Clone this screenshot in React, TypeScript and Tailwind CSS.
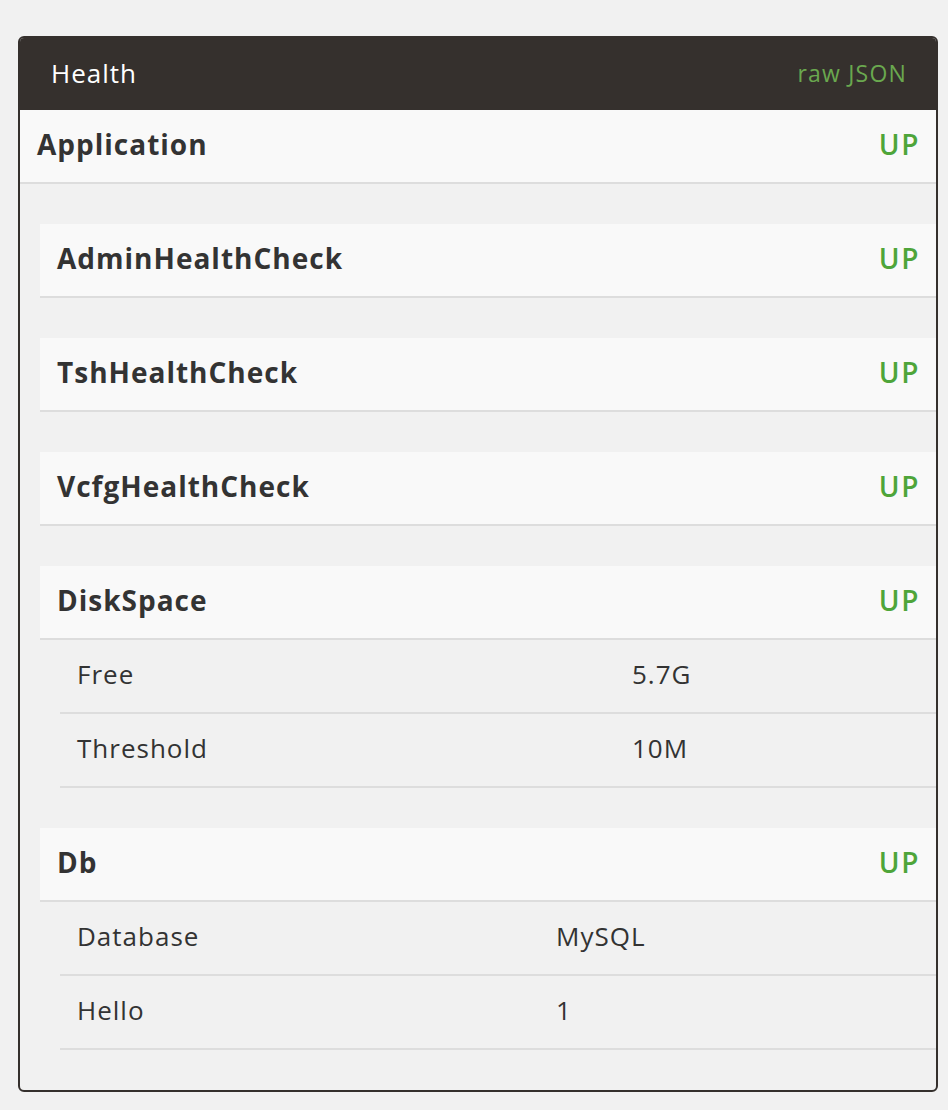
import React from 'react';

type Detail = { label: string; value: string };
type Check = { name: string; status: string; details?: Detail[]; labelCol?: string };

const checks: Check[] = [
  { name: 'AdminHealthCheck', status: 'UP' },
  { name: 'TshHealthCheck', status: 'UP' },
  { name: 'VcfgHealthCheck', status: 'UP' },
  {
    name: 'DiskSpace',
    status: 'UP',
    labelCol: 'grid-cols-[572px_1fr]',
    details: [
      { label: 'Free', value: '5.7G' },
      { label: 'Threshold', value: '10M' },
    ],
  },
  {
    name: 'Db',
    status: 'UP',
    labelCol: 'grid-cols-[496px_1fr]',
    details: [
      { label: 'Database', value: 'MySQL' },
      { label: 'Hello', value: '1' },
    ],
  },
];

function StatusRow({ name, status }: { name: string; status: string }) {
  return (
    <div className="h-[74px] flex items-center justify-between bg-[#f9f9f9] border-b-2 border-[#dddddd] pl-[17px] pr-[16px] pb-[4px]">
      <span className="text-[28px] font-bold text-[#333333] tracking-[1px]">{name}</span>
      <span className="text-[28px] font-semibold text-[#4ea53a] tracking-[1.6px]">{status}</span>
    </div>
  );
}

export default function App() {
  return (
    <div className="min-h-screen bg-[#f1f1f1] pt-[36px] pl-[18px]" style={{ fontFamily: '"Open Sans", "Liberation Sans", sans-serif' }}>
      <div className="w-[920px] border-2 border-[#35302d] rounded-[6px] overflow-hidden bg-[#f1f1f1]">
        {/* Panel header */}
        <div className="h-[72px] bg-[#35302d] flex items-center justify-between pl-[31px] pr-[29px] pb-[2px]">
          <span className="text-[26px] text-white tracking-[1px]">Health</span>
          <span className="text-[23px] text-[#6aa84f] tracking-[1.2px]">raw JSON</span>
        </div>

        {/* Overall status */}
        <StatusRow name="Application" status="UP" />

        {/* Individual checks */}
        <div className="pl-[20px] pb-[40px]">
          {checks.map((c) => (
            <div key={c.name} className="mt-[40px]">
              <StatusRow name={c.name} status={c.status} />
              {c.details && (
                <div className="pl-[20px]">
                  {c.details.map((d) => (
                    <div key={d.label} className={`h-[74px] grid ${c.labelCol} items-center border-b-2 border-[#dddddd] pb-[4px] text-[26px] text-[#333333] tracking-[1px]`}>
                      <span className="pl-[17px]">{d.label}</span>
                      <span>{d.value}</span>
                    </div>
                  ))}
                </div>
              )}
            </div>
          ))}
        </div>
      </div>
    </div>
  );
}
